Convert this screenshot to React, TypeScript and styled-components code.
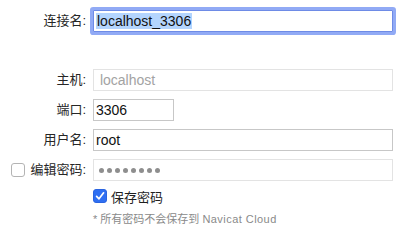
import React from 'react'
import styled, { createGlobalStyle } from 'styled-components'

const GlobalStyle = createGlobalStyle`
  html, body {
    margin: 0;
    padding: 0;
    background: #fff;
  }
  body {
    font-family: 'Liberation Sans', 'Noto Sans CJK SC', sans-serif;
    color: #262626;
  }
`

type FieldKind = 'focused' | 'normal' | 'disabled'

const Form = styled.div`
  display: grid;
  grid-template-columns: 86px 300px;
  column-gap: 7px;
  row-gap: 8px;
  align-items: center;
  padding-top: 10px;
`

const Label = styled.div<{ $spaced?: boolean }>`
  display: flex;
  align-items: center;
  justify-content: flex-end;
  gap: 5px;
  font-size: 13px;
  line-height: 22px;
  color: #262626;
  margin-bottom: ${(p) => (p.$spaced ? '29px' : '0')};
`

const Field = styled.div<{ $kind: FieldKind; $width?: number; $spaced?: boolean }>`
  box-sizing: border-box;
  height: 22px;
  width: ${(p) => (p.$width ? `${p.$width}px` : '100%')};
  display: flex;
  align-items: center;
  padding: 0 2px;
  background: #fff;
  font-size: 14px;
  color: ${(p) => (p.$kind === 'disabled' ? '#a3a3a3' : '#111')};
  border: 1px solid
    ${(p) => (p.$kind === 'focused' ? '#6e8be6' : p.$kind === 'disabled' ? '#e3e3e3' : '#c7c7c7')};
  box-shadow: ${(p) => (p.$kind === 'focused' ? '0 0 0 3px #91aaf5' : 'none')};
  border-radius: ${(p) => (p.$kind === 'focused' ? '1px' : '0')};
  margin-bottom: ${(p) => (p.$spaced ? '29px' : '0')};
`

const Selected = styled.span`
  background: #b4d5fe;
  padding: 0 1px;
  line-height: 16px;
`

const Dots = styled.div`
  display: flex;
  gap: 3px;
  padding-left: 3px;
`

const Dot = styled.span`
  width: 5px;
  height: 5px;
  border-radius: 50%;
  background: #8e8e8e;
`

const Box = styled.span<{ $checked?: boolean }>`
  box-sizing: border-box;
  width: 14px;
  height: 14px;
  border-radius: 3px;
  display: inline-flex;
  align-items: center;
  justify-content: center;
  flex-shrink: 0;
  background: ${(p) => (p.$checked ? '#2f6ff2' : '#fff')};
  border: 1px solid ${(p) => (p.$checked ? '#2a64e0' : '#b4b4b4')};
`

const CheckRow = styled.div`
  grid-column: 2;
  display: flex;
  align-items: center;
  gap: 4px;
  font-size: 13px;
  color: #1f1f1f;
  height: 14px;
`

const Note = styled.div`
  grid-column: 2;
  font-size: 11px;
  color: #8a8a8a;
  margin-top: -1px;
`

const Brand = styled.span`
  letter-spacing: 0.45px;
`

const Check = ({ checked }: { checked?: boolean }) => (
  <Box $checked={checked}>
    {checked && (
      <svg width='10' height='10' viewBox='0 0 10 10'>
        <path d='M1.6 5.3 L4 7.8 L8.6 1.8' fill='none' stroke='#fff' strokeWidth='1.7' strokeLinecap='round' strokeLinejoin='round' />
      </svg>
    )}
  </Box>
)

export default function App() {
  return (
    <>
      <GlobalStyle />
      <Form>
        <Label $spaced>连接名:</Label>
        <Field $kind='focused' $spaced>
          <Selected>localhost_3306</Selected>
        </Field>

        <Label>主机:</Label>
        <Field $kind='disabled'>&nbsp;localhost</Field>

        <Label>端口:</Label>
        <Field $kind='normal' $width={81}>3306</Field>

        <Label>用户名:</Label>
        <Field $kind='normal'>root</Field>

        <Label>
          <Check />
          编辑密码:
        </Label>
        <Field $kind='disabled'>
          <Dots>
            {Array.from({ length: 8 }).map((_, i) => (
              <Dot key={i} />
            ))}
          </Dots>
        </Field>

        <CheckRow>
          <Check checked />
          保存密码
        </CheckRow>
        <Note>
          * 所有密码不会保存到 <Brand>Navicat Cloud</Brand>
        </Note>
      </Form>
    </>
  )
}
